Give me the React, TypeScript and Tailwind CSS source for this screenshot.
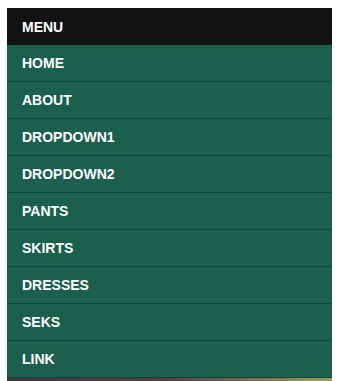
const items = ['HOME', 'ABOUT', 'DROPDOWN1', 'DROPDOWN2', 'PANTS', 'SKIRTS', 'DRESSES', 'SEKS', 'LINK'];

export default function App() {
  return (
    <div className="w-[338px] h-[381px] bg-white overflow-hidden pt-2 pl-[7px] pr-[6px] font-['Liberation_Sans',Arial,sans-serif]">
      <nav className="w-[325px]">
        {/* Header */}
        <div className="h-[37px] bg-[#121212] flex items-center px-[15px] pt-px text-white text-[14px] font-bold">
          MENU
        </div>

        {/* Items */}
        <ul>
          {items.map((item) => (
            <li
              key={item}
              className="h-[37px] bg-[#1b604c] border-b border-[#0f4637] flex items-center px-[15px] pt-px text-white text-[14px] font-bold"
            >
              {item}
            </li>
          ))}
        </ul>

        {/* Image strip peeking below */}
        <div className="h-[4px] bg-gradient-to-r from-[#3a3a3a] via-[#5a3e4a] to-[#9aa24a]" />
      </nav>
    </div>
  );
}
